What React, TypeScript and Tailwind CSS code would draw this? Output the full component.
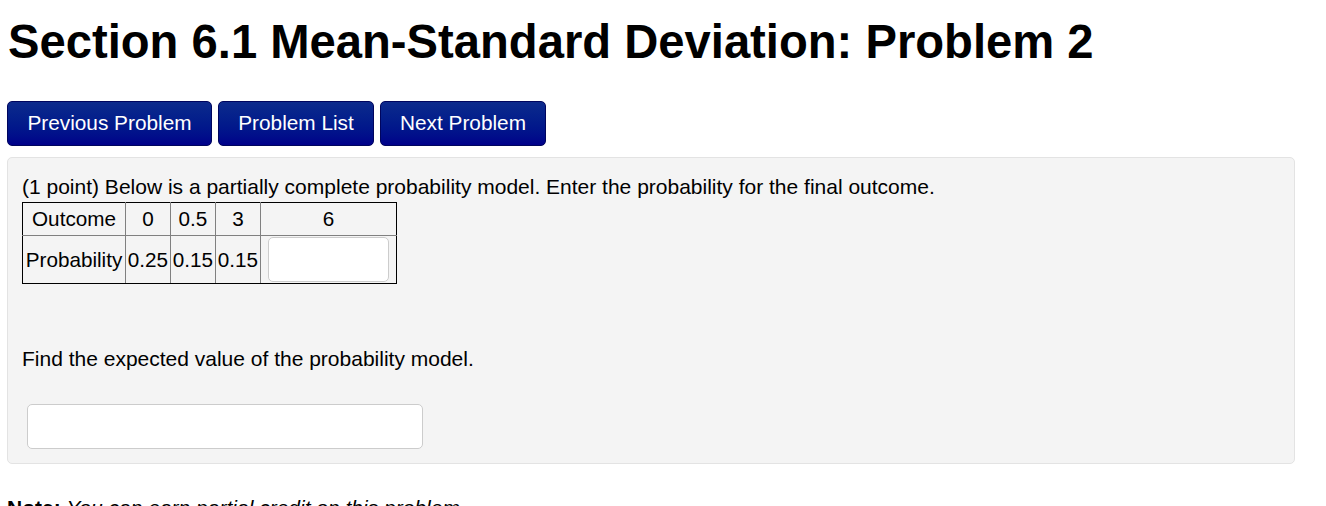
import React from "react";

const font = { fontFamily: '"Liberation Sans", Arial, sans-serif' };

const btn =
  "h-[45px] rounded-[5px] border border-[#00055e] bg-gradient-to-b from-[#0d2a8c] to-[#00008a] text-white text-[20.8px] leading-none";

export default function App() {
  return (
    <div className="min-h-[506px] bg-white text-black px-[7px]" style={font}>
      <h1 className="pt-[15px] text-[47.2px] leading-[54px] font-bold pl-[1px]">
        Section 6.1 Mean-Standard Deviation: Problem 2
      </h1>
      <div className="mt-[32px] flex gap-[6px]">
        <button className={`${btn} w-[205px]`}>Previous Problem</button>
        <button className={`${btn} w-[156px]`}>Problem List</button>
        <button className={`${btn} w-[166px]`}>Next Problem</button>
      </div>
      <div className="mt-[11px] w-[1288px] h-[307px] rounded-[5px] border border-[#e3e3e3] bg-[#f4f4f4] pl-[14px] pt-[17px] text-[21px] leading-[24px]">
        <p>
          (1 point) Below is a partially complete probability model. Enter the
          probability for the final outcome.
        </p>
        <table className="mt-[3px] border-collapse border border-black text-[20.7px] leading-[24px]">
          <tbody>
            <tr className="h-[33px]">
              <td className="border border-[#808080] border-l-black border-t-black w-[103px] text-center">Outcome</td>
              <td className="border border-[#808080] border-t-black w-[45px] text-center">0</td>
              <td className="border border-[#808080] border-t-black w-[45px] text-center">0.5</td>
              <td className="border border-[#808080] border-t-black w-[45px] text-center">3</td>
              <td className="border border-[#808080] border-t-black border-r-black w-[136px] text-center">6</td>
            </tr>
            <tr className="h-[48px]">
              <td className="border border-[#808080] border-l-black border-b-black text-center px-0">Probability</td>
              <td className="border border-[#808080] border-b-black text-center px-0">0.25</td>
              <td className="border border-[#808080] border-b-black text-center px-0">0.15</td>
              <td className="border border-[#808080] border-b-black text-center px-0">0.15</td>
              <td className="border border-[#808080] border-b-black border-r-black text-center">
                <div className="mx-auto h-[45px] w-[121px] rounded-[5px] border border-[#cccccc] bg-white" />
              </td>
            </tr>
          </tbody>
        </table>
        <p className="mt-[63px]">Find the expected value of the probability model.</p>
        <div className="mt-[33px] ml-[5px] h-[45px] w-[396px] rounded-[5px] border border-[#cccccc] bg-white" />
      </div>
      <p className="mt-[32px] text-[21px] leading-[24px]">
        <b>Note:</b> <i>You can earn partial credit on this problem.</i>
      </p>
    </div>
  );
}
